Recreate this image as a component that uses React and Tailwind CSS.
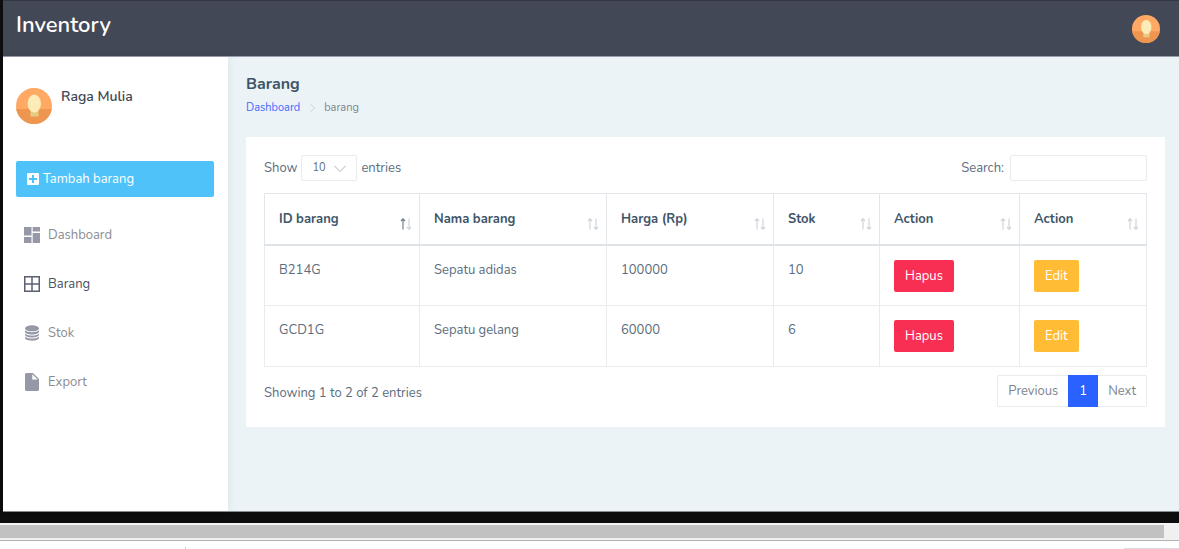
const columns = [
  { label: 'ID barang', width: 'w-[155px]', sorted: true },
  { label: 'Nama barang', width: 'w-[187px]' },
  { label: 'Harga (Rp)', width: 'w-[167px]' },
  { label: 'Stok', width: 'w-[106px]' },
  { label: 'Action', width: 'w-[140px]' },
  { label: 'Action', width: 'w-[127px]' },
];

const items = [
  { id: 'B214G', name: 'Sepatu adidas', price: 100000, stock: 10 },
  { id: 'GCD1G', name: 'Sepatu gelang', price: 60000, stock: 6 },
];

function Avatar({ className }) {
  return (
    <svg viewBox="0 0 36 36" className={className} role="img" aria-label="Raga Mulia">
      <clipPath id="disc">
        <circle cx="18" cy="18" r="18" />
      </clipPath>
      <g clipPath="url(#disc)">
        <rect width="36" height="36" fill="#ffa964" />
        <rect y="21" width="36" height="15" fill="#ee9650" />
        <path d="M14.500 21h8v7.500h-8z" fill="#e5cc85" />
        <ellipse cx="18.300" cy="15.500" rx="6.700" ry="9" fill="#fdecb8" />
        <path d="M14 21.500h8.800l-1.300 2h-6z" fill="#fdecb8" />
      </g>
    </svg>
  );
}

function PlusBoxIcon() {
  return (
    <svg viewBox="0 0 12 12" className="size-3" fill="currentColor" aria-hidden="true">
      <path fillRule="evenodd" d="M1 0h10a1 1 0 0 1 1 1v10a1 1 0 0 1-1 1H1a1 1 0 0 1-1-1V1a1 1 0 0 1 1-1zm4 2v3H2v2h3v3h2V7h3V5H7V2z" />
    </svg>
  );
}

function DashboardIcon() {
  return (
    <svg viewBox="0 0 16 16" className="size-4" fill="currentColor" aria-hidden="true">
      <path d="M0 0h7.500v8.500H0zM8.700 0H16v4.500H8.700zM0 10h7.500v6H0zM8.700 6H16v10H8.700z" />
    </svg>
  );
}

function GridIcon() {
  return (
    <svg viewBox="0 0 16 16" className="size-4" fill="none" stroke="currentColor" strokeWidth="1.500" aria-hidden="true">
      <path d="M.75.750h14.500v14.500H.75zM8 .75v14.500M.75 8h14.500" />
    </svg>
  );
}

function DatabaseIcon() {
  return (
    <svg viewBox="0 0 16 16" className="size-4" fill="currentColor" aria-hidden="true">
      <ellipse cx="8" cy="3.300" rx="7" ry="3" />
      <path d="M1 5c1 1.500 4 2.200 7 2.200s6-.7 7-2.200v1.700c0 1.600-3 2.700-7 2.700S1 8.300 1 6.700z" />
      <path d="M1 8.500c1 1.400 4 2 7 2s6-.6 7-2v1.200c0 1.600-3 2.700-7 2.700s-7-1.100-7-2.700z" />
      <path d="M1 11.600c1 1.400 4 2 7 2s6-.6 7-2v1.200c0 1.700-3 2.900-7 2.900s-7-1.200-7-2.900z" />
    </svg>
  );
}

function FileIcon() {
  return (
    <svg viewBox="0 0 16 18" className="h-[18px] w-4" fill="currentColor" aria-hidden="true">
      <path fillRule="evenodd" d="M2.500 0H9l6 6v10.500a1.500 1.500 0 0 1-1.500 1.500h-11A1.500 1.500 0 0 1 1 16.500v-15A1.500 1.500 0 0 1 2.500 0zM8.300 1.200v5.300h5.400z" />
    </svg>
  );
}

function SortIcon({ sorted }) {
  return (
    <svg viewBox="0 0 12 12" className="size-3" fill="none" stroke="#cfd5db" strokeWidth="1.200" aria-hidden="true">
      <path d="M3 11.500V1M1 3l2-2.300L5 3" stroke={sorted ? '#75828f' : '#cfd5db'} />
      <path d="M9 .5V11M7 9l2 2.300L11 9" />
    </svg>
  );
}

const links = [
  { label: 'Dashboard', Icon: DashboardIcon },
  { label: 'Barang', Icon: GridIcon, active: true },
  { label: 'Stok', Icon: DatabaseIcon },
  { label: 'Export', Icon: FileIcon },
];

function Sidebar() {
  return (
    <aside className="z-10 w-[225px] shrink-0 bg-white shadow-[1px_0_8px_rgba(0,0,0,0.06)]">
      <div className="flex gap-[9px] px-[13px] pt-[31px]">
        <Avatar className="size-9" />
        <h2 className="text-[14px] leading-[18px] font-semibold text-[#3e4653]">Raga Mulia</h2>
      </div>
      <div className="px-[13px] pt-[37px]">
        <button type="button" className="flex h-9 w-[198px] items-center gap-1 rounded-xs bg-[#4fc3f9] px-[11px] text-[13px] text-white">
          <PlusBoxIcon />
          Tambah barang
        </button>
      </div>
      <nav className="flex flex-col pt-[13px]">
        {links.map(({ label, Icon, active }) => (
          <a
            key={label}
            href="#"
            className={
              active
                ? 'flex h-[49px] items-center gap-2 px-[21px] text-[13px] text-[#4a5062]'
                : 'flex h-[49px] items-center gap-2 px-[21px] text-[13px] text-[#8b8c93]'
            }
          >
            <span className={active ? 'text-[#5a6072]' : 'text-[#9698a8]'}>
              <Icon />
            </span>
            {label}
          </a>
        ))}
      </nav>
    </aside>
  );
}

function ItemTable() {
  return (
    <table className="mt-3 w-full table-fixed border-collapse border border-[#e3e7eb] text-left">
      <thead>
        <tr className="h-[51px] border-b-2 border-[#dee3e8]">
          {columns.map(({ label, width, sorted }, i) => (
            <th key={i} className={`${width} border-x border-t border-[#e3e7eb] pr-[7px] pl-3.5 font-bold text-[#3e5569]`}>
              <div className="flex items-center justify-between">
                <span>{label}</span>
                <span className="pt-2.5">
                  <SortIcon sorted={sorted} />
                </span>
              </div>
            </th>
          ))}
        </tr>
      </thead>
      <tbody>
        {items.map(({ id, name, price, stock }) => (
          <tr key={id} className="h-[61px] align-top">
            <td className="border border-[#e9ecef] px-3.5 pt-3.5">{id}</td>
            <td className="border border-[#e9ecef] px-3.5 pt-3.5">{name}</td>
            <td className="border border-[#e9ecef] px-3.5 pt-3.5">{price}</td>
            <td className="border border-[#e9ecef] px-3.5 pt-3.5">{stock}</td>
            <td className="border border-[#e9ecef] px-3.5 pt-3.5">
              <button type="button" className="h-8 rounded-xs bg-[#f82f53] px-[11px] text-white">Hapus</button>
            </td>
            <td className="border border-[#e9ecef] px-3.5 pt-3.5">
              <button type="button" className="h-8 rounded-xs bg-[#ffbc34] px-[11px] text-white">Edit</button>
            </td>
          </tr>
        ))}
      </tbody>
    </table>
  );
}

export default function App() {
  return (
    <div className="flex min-h-screen flex-col bg-white font-['Nunito','Lato',sans-serif] text-[13px] leading-5 text-[#5b6d7e]">
      <div className="flex flex-1 flex-col border-b-[11px] border-l-[3px] border-[#0d0d0d]">
        <header className="flex h-[57px] items-center justify-between border-t border-b border-t-[#343846] border-b-[#9a9cab] bg-[#434856] pr-[19px] pl-[13px]">
          <h1 className="pb-2 text-[22px] leading-7 font-semibold text-white">Inventory</h1>
          <Avatar className="size-7" />
        </header>
        <div className="flex flex-1 border-b border-[#8a8e90]">
          <Sidebar />
          <main className="flex-1 bg-[#ebf3f7] pt-[17px] pr-[15px] pb-6 pl-[18px]">
            <h2 className="text-[16px] leading-5 font-bold text-[#3e5569]">Barang</h2>
            <nav aria-label="Breadcrumb" className="flex items-center gap-1.5 pt-1 text-[11px] leading-5">
              <a href="#" className="text-[#4068ff]">Dashboard</a>
              <svg viewBox="0 0 12 12" className="size-3" fill="none" stroke="#cdd5db" aria-hidden="true">
                <path d="M4 1.500 8.500 6 4 10.500" />
              </svg>
              <span className="text-[#7c858e]">barang</span>
            </nav>
            <section className="mt-[19px] bg-white px-[18px] pt-[18px] pb-5">
              <div className="flex items-center justify-between">
                <div className="flex items-center gap-1">
                  <label htmlFor="length">Show</label>
                  <span className="relative">
                    <select id="length" defaultValue="10" className="block h-[26px] w-14 appearance-none rounded-xs border border-[#e9ecef] bg-white pl-2.5 text-[11px]">
                      <option>10</option>
                      <option>25</option>
                      <option>50</option>
                    </select>
                    <svg viewBox="0 0 12 12" className="pointer-events-none absolute top-2 right-[11px] size-3" fill="none" stroke="#a9b3bc" aria-hidden="true">
                      <path d="M.5 3 6 8.500 11.500 3" />
                    </svg>
                  </span>
                  <label htmlFor="length">entries</label>
                </div>
                <div className="flex items-center gap-1.5">
                  <label htmlFor="search">Search:</label>
                  <input id="search" type="search" className="h-[26px] w-[137px] rounded-xs border border-[#e9ecef] px-2" />
                </div>
              </div>
              <ItemTable />
              <div className="flex items-center justify-between pt-2">
                <p className="pt-1">Showing 1 to 2 of 2 entries</p>
                <nav aria-label="Pagination" className="flex h-8 text-[#7c858e]">
                  <button type="button" className="rounded-l-xs border border-r-0 border-[#e9ecef] px-2.5">Previous</button>
                  <button type="button" className="bg-[#2962ff] px-[11px] text-white">1</button>
                  <button type="button" className="rounded-r-xs border border-l-0 border-[#e9ecef] px-2.5">Next</button>
                </nav>
              </div>
            </section>
          </main>
        </div>
      </div>
      <div className="border-t-2 border-b border-t-[#f7f2f5] border-b-[#b3b3b3] bg-[#f0f0f0] pr-[15px] pb-0.5">
        <div className="h-[13px] bg-[#c1c1c1]" />
      </div>
      <div className="flex h-2 items-end justify-between pl-[185px]">
        <div className="h-0.5 w-px bg-[#cccccc]" />
        <div className="h-px w-[55px] bg-[#dcdce0]" />
      </div>
    </div>
  );
}
